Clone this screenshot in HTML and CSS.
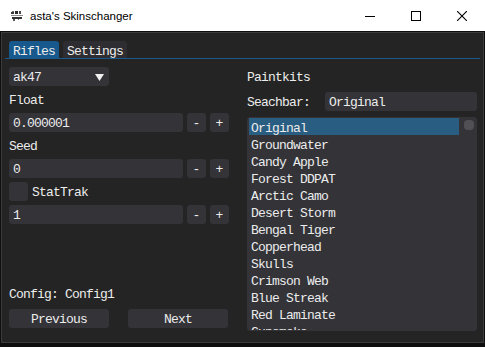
FILE: index.html
```html
<!DOCTYPE html>
<html lang="en">
<head>
  <meta charset="UTF-8" />
  <title>asta's Skinschanger</title>
  <link rel="stylesheet" href="styles.css">
</head>
<body>
<div class="titlebar">
  <svg class="app-icon" width="12" height="11" viewBox="0 0 12 11">
    <rect x="1" y="0" width="2" height="1" fill="#6a6a6a"/>
    <rect x="0" y="1" width="3" height="2" fill="#3a3a3a"/>
    <rect x="4" y="0" width="3" height="3" fill="#2a2a2a"/>
    <rect x="8" y="0" width="2" height="3" fill="#4a4a4a"/>
    <rect x="0" y="4" width="12" height="1" fill="#8a8a8a"/>
    <rect x="1" y="6" width="10" height="2" fill="#333"/>
    <rect x="2" y="8" width="2" height="2" fill="#555"/>
    <rect x="7" y="8" width="1" height="1" fill="#777"/>
  </svg>
  <span class="title">asta's Skinschanger</span>
  <div class="caption">
    <div class="cap-btn">
      <svg width="10" height="10" viewBox="0 0 10 10"><rect x="0" y="5" width="10" height="1" fill="#000"/></svg>
    </div>
    <div class="cap-btn">
      <svg width="10" height="10" viewBox="0 0 10 10"><rect x="0.5" y="0.5" width="9" height="9" fill="none" stroke="#000"/></svg>
    </div>
    <div class="cap-btn">
      <svg width="10" height="10" viewBox="0 0 10 10"><path d="M0 0L10 10M10 0L0 10" stroke="#000" stroke-width="1.1"/></svg>
    </div>
  </div>
</div>

<div class="window">
  <div class="tabbar">
    <div class="tab active">Rifles</div>
    <div class="tab">Settings</div>
  </div>
  <div class="tabline"></div>

  <div class="main">
    <div class="left">
      <div class="combo">
        <span>ak47</span>
        <span class="combo-arrow">
          <svg width="9" height="7" viewBox="0 0 9 7"><polygon points="0,0 9,0 4.5,7" fill="#f0f0f0"/></svg>
        </span>
      </div>

      <div class="label">Float</div>
      <div class="input-row">
        <div class="frame input">0.000001</div>
        <div class="frame step">-</div>
        <div class="frame step">+</div>
      </div>

      <div class="label">Seed</div>
      <div class="input-row">
        <div class="frame input">0</div>
        <div class="frame step">-</div>
        <div class="frame step">+</div>
      </div>

      <div class="check-row">
        <div class="frame checkbox"></div>
        <span class="label">StatTrak</span>
      </div>

      <div class="input-row">
        <div class="frame input">1</div>
        <div class="frame step">-</div>
        <div class="frame step">+</div>
      </div>

      <div class="label config">Config: Config1</div>
      <div class="nav-row">
        <div class="frame nav-btn">Previous</div>
        <div class="frame nav-btn">Next</div>
      </div>
    </div>

    <div class="right">
      <div class="label">Paintkits</div>
      <div class="search-row">
        <span class="label">Seachbar:</span>
        <div class="frame search">Original</div>
      </div>
      <div class="listbox">
        <div class="list-items">
          <div class="item selected">Original</div>
          <div class="item">Groundwater</div>
          <div class="item">Candy Apple</div>
          <div class="item">Forest DDPAT</div>
          <div class="item">Arctic Camo</div>
          <div class="item">Desert Storm</div>
          <div class="item">Bengal Tiger</div>
          <div class="item">Copperhead</div>
          <div class="item">Skulls</div>
          <div class="item">Crimson Web</div>
          <div class="item">Blue Streak</div>
          <div class="item">Red Laminate</div>
          <div class="item">Gunsmoke</div>
        </div>
        <div class="scroll-track"><div class="scroll-grab"></div></div>
      </div>
    </div>
  </div>
</div>
</body>
</html>
```

FILE: styles.css
```css
body { margin: 0; width: 485px; height: 347px; overflow: hidden; background: #0e0e0e; font-family: "Liberation Mono", monospace; font-size: 13px; letter-spacing: -0.8px; color: #ececec; }

.titlebar { height: 31px; background: #fff; display: flex; align-items: center; letter-spacing: 0; }
.app-icon { margin-left: 11px; margin-top: 1px; }
.title { margin-left: 7px; font-family: "Liberation Sans", sans-serif; font-size: 11.5px; color: #000; }
.caption { margin-left: auto; display: flex; height: 31px; }
.cap-btn { width: 46px; height: 31px; display: flex; align-items: center; justify-content: center; }

.window { margin: 1px 0 0 1px; width: 483px; height: 311px; box-sizing: border-box; border: 1px solid #3b3b3b; background: #242424; padding: 8px 7px 0 7px; }

.tabbar { display: flex; gap: 4px; height: 17px; }
.tab { height: 17px; box-sizing: border-box; padding: 2px 4px 0 4px; line-height: 17px; background: #2d2d32; border-radius: 3px 3px 0 0; }
.tab.active { background: #17598d; }
.tabline { height: 1px; background: #17598d; margin: 0 -4px; }

.main { display: flex; margin-top: 8px; }
.left { width: 220px; display: flex; flex-direction: column; }
.right { width: 230px; margin-left: 18px; display: flex; flex-direction: column; }

.label { height: 19px; box-sizing: border-box; padding-top: 1px; line-height: 19px; white-space: pre; }
.left > .label { margin-top: 4px; }
.left > .label.config { margin-top: 60px; }

.frame { height: 19px; box-sizing: border-box; padding-top: 1px; line-height: 19px; background: #333338; border-radius: 3px; white-space: pre; }

.combo { width: 100px; height: 19px; box-sizing: border-box; padding: 1px 0 0 4px; line-height: 19px; background: #333338; border-radius: 3px; display: flex; }
.combo-arrow { margin-left: auto; width: 19px; height: 18px; display: flex; align-items: center; justify-content: center; }

.input-row { display: flex; gap: 4px; margin-top: 4px; }
.input { width: 174px; padding-left: 4px; }
.step { width: 19px; text-align: center; letter-spacing: 0; }

.check-row { display: flex; gap: 4px; margin-top: 4px; }
.checkbox { width: 19px; }

.nav-row { display: flex; gap: 19px; margin-top: 6px; }
.nav-btn { width: 100px; text-align: center; }

.search-row { display: flex; margin-top: 6px; }
.search { margin-left: auto; width: 152px; padding-left: 4px; }

.listbox { margin-top: 6px; height: 214px; background: #333338; border-radius: 3px; display: flex; }
.list-items { width: 210px; height: 212px; margin: 1px 0 0 2px; overflow: hidden; }
.item { height: 17px; box-sizing: border-box; padding: 2px 0 0 2px; line-height: 17px; white-space: pre; }
.item.selected { background: #2a5d82; }
.scroll-track { flex: 1; padding: 3px 3px 0 5px; }
.scroll-grab { width: 10px; height: 10px; background: #505055; border-radius: 4px; }
```
